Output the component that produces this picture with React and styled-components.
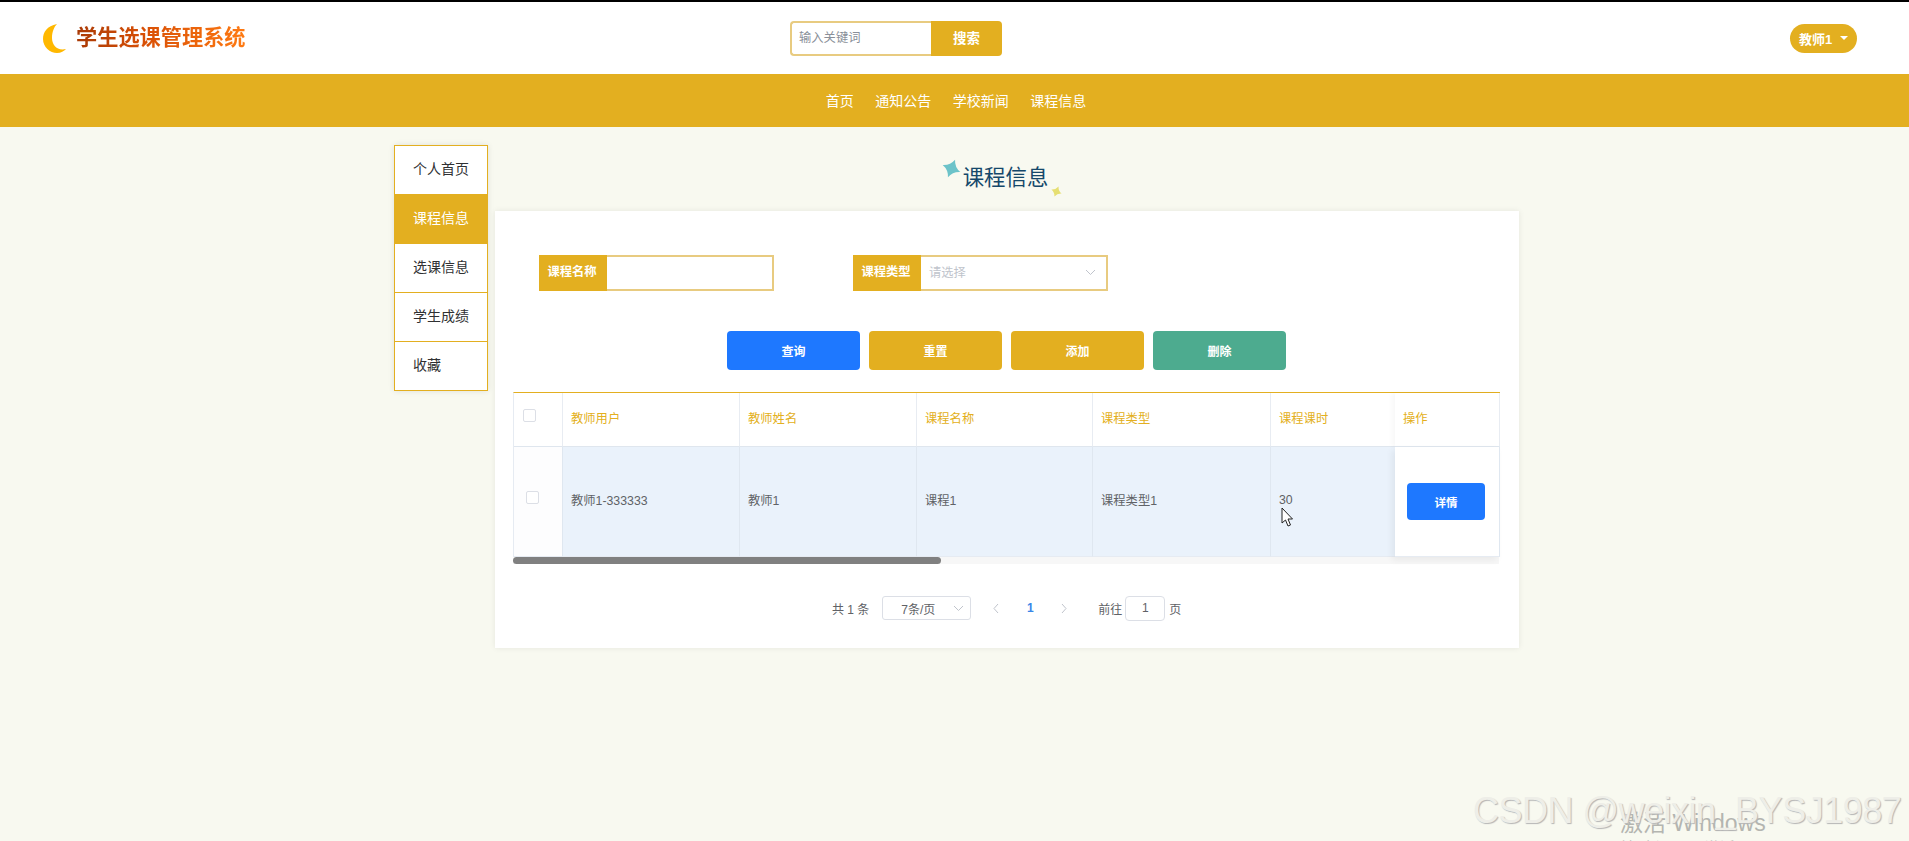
import React from "react";
import styled, { createGlobalStyle } from "styled-components";

const gold = "#e3af20";

const GlobalStyle = createGlobalStyle`
    html, body {
        margin: 0;
        padding: 0;
        background: #f8f9f0;
        font-family: "Liberation Sans", "Noto Sans CJK SC", sans-serif;
    }
    * {
        box-sizing: border-box;
    }
`

//styled components
const Page = styled.div`
    position: relative;
    height: 841px;
    overflow: hidden;
    border-top: 2px solid #000;
`
const Header = styled.header`
    height: 72px;
    background: #fff;
    display: grid;
    grid-template-columns: 747px 212px 1fr;
    align-items: center;
    padding: 0 52px 0 43px;
`
const Logo = styled.div`
    display: flex;
    align-items: center;
    gap: 10px;
`
const LogoText = styled.h1`
    margin: 0;
    font-size: 21.2px;
    line-height: 28px;
    font-weight: 700;
    background: linear-gradient(90deg, #a93a06 0%, #d84f05 40%, #ff7a12 100%);
    -webkit-background-clip: text;
    background-clip: text;
    color: transparent;
`
const SearchBox = styled.div`
    display: flex;
    width: 212px;
    height: 35px;
`
const SearchInput = styled.div`
    width: 141px;
    border: 2px solid #e8cb80;
    border-right: 0;
    border-radius: 4px 0 0 4px;
    padding-left: 7px;
    font-size: 12.3px;
    line-height: 31px;
    color: #8a8f99;
`
const SearchButton = styled.div`
    flex: 1;
    background: ${gold};
    border-radius: 0 4px 4px 0;
    color: #fff;
    font-size: 13.5px;
    font-weight: 700;
    text-align: center;
    line-height: 35px;
`
const UserPill = styled.div`
    justify-self: end;
    width: 67px;
    height: 29px;
    border-radius: 15px;
    background: ${gold};
    color: #fff;
    font-size: 13px;
    font-weight: 700;
    display: flex;
    align-items: center;
    padding-left: 9px;
    gap: 8px;
`
const Caret = styled.span`
    width: 0;
    height: 0;
    border-left: 4px solid transparent;
    border-right: 4px solid transparent;
    border-top: 4px solid #fff;
`
const NavBar = styled.nav`
    height: 53px;
    background: ${gold};
    display: flex;
    justify-content: center;
    align-items: center;
    gap: 21.5px;
    padding: 0 0 2px 3px;
`
const NavItem = styled.a`
    color: #fff;
    font-size: 14px;
`
const Main = styled.main`
    display: flex;
    align-items: flex-start;
    gap: 7px;
    margin: 18px 0 0 394px;
    width: 1124px;
`
const Sidebar = styled.aside`
    width: 94px;
    flex: none;
    border: 1px solid ${gold};
    box-shadow: 0 0 6px rgba(0, 0, 0, 0.1);
    background: #fff;
`
const SideItem = styled.div`
    height: ${(p) => (p.$last ? 48 : 49)}px;
    padding-left: 18px;
    font-size: 14px;
    line-height: 47px;
    color: ${(p) => (p.$active ? "#fff" : "#303133")};
    background: ${(p) => (p.$active ? gold : "#fff")};
    border-bottom: ${(p) => (p.$last ? "0" : `1px solid ${gold}`)};
`
const Content = styled.section`
    flex: 1;
`
const TitleRow = styled.div`
    height: 66px;
    display: flex;
    justify-content: center;
    align-items: flex-start;
    padding: 14px 10px 0 0;
`
const TitleWrap = styled.div`
    display: flex;
    align-items: flex-start;
`
const Title = styled.h2`
    margin: 4px 3px 0 2px;
    font-size: 21.4px;
    line-height: 30px;
    font-weight: 400;
    color: #15486a;
`
const SmallStar = styled.div`
    margin-top: 24px;
`
const Card = styled.div`
    background: #fff;
    box-shadow: 0 0 6px rgba(0, 0, 0, 0.08);
    padding: 44px 19px 28px 18px;
`
const Filters = styled.div`
    display: flex;
    gap: 79px;
    padding-left: 26px;
`
const Field = styled.div`
    display: flex;
    width: ${(p) => p.$w}px;
    height: 36px;
    border: 2px solid #e8cb80;
    background: #fff;
`
const FieldLabel = styled.div`
    width: 68px;
    margin: -2px 0 -2px -2px;
    padding-right: 2px;
    background: ${gold};
    color: #fff;
    font-size: 12.3px;
    font-weight: 700;
    text-align: center;
    line-height: 35px;
`
const FieldValue = styled.div`
    flex: 1;
    display: flex;
    justify-content: space-between;
    align-items: center;
    padding: 0 10px 2px 8px;
    font-size: 12.3px;
    color: #c0c4cc;
`
const Actions = styled.div`
    display: flex;
    justify-content: center;
    gap: 9px;
    margin-top: 40px;
`
const ActionButton = styled.button`
    width: 133px;
    height: 39px;
    border: 0;
    border-radius: 4px;
    background: ${(p) => p.$bg};
    color: #fff;
    font: 700 12px "Liberation Sans", "Noto Sans CJK SC", sans-serif;
`
const Table = styled.table`
    width: 986px;
    table-layout: fixed;
    border-collapse: separate;
    border-spacing: 0;
    margin-top: 22px;
    border-top: 1px solid ${gold};
    border-left: 1px solid #e6ebf2;
`
const HeadCell = styled.th`
    height: 54px;
    padding: 0 8px 3px;
    text-align: left;
    font-size: 12.3px;
    font-weight: 400;
    color: ${gold};
    background: #fff;
    border-right: 1px solid #e8ecf2;
    border-bottom: 1px solid #dfe6ee;
    &:nth-last-child(2) {
        border-right: 0;
    }
`
const CheckHeadCell = styled(HeadCell)`
    padding: 0;
`
const BodyCell = styled.td`
    height: 110px;
    padding: 0 8px 3px;
    font-size: 12.3px;
    color: #606266;
    background: ${(p) => (p.$plain ? "#fdfdfe" : "#eaf2fb")};
    border-right: 1px solid #dfe7f0;
    border-bottom: 1px solid #e6ebf2;
    &:nth-last-child(2) {
        border-right: 0;
    }
`
const CheckBodyCell = styled(BodyCell)`
    padding: 0;
`
const FixedHead = styled(HeadCell)`
    position: relative;
    z-index: 1;
    box-shadow: -3px 0 5px rgba(0, 0, 0, 0.03);
`
const FixedCell = styled(BodyCell)`
    position: relative;
    z-index: 1;
    background: #fff;
    padding: 0 12px;
    box-shadow: -3px 3px 7px rgba(0, 0, 0, 0.06);
`
const Check = styled.span`
    display: block;
    width: 13px;
    height: 13px;
    margin: ${(p) => p.$m};
    border: 1px solid #dcdfe6;
    border-radius: 2px;
    background: #fff;
`
const Track = styled.div`
    width: 986px;
    height: 7px;
    background: #f7f7f7;
`
const Thumb = styled.div`
    width: 428px;
    height: 7px;
    background: #808080;
    border-radius: 4px;
`
const DetailButton = styled(ActionButton)`
    display: block;
    width: 78px;
    height: 37px;
    font-size: 11.5px;
`
const Pager = styled.div`
    display: flex;
    align-items: center;
    height: 24px;
    margin-top: 32px;
    padding-left: 319px;
    font-size: 12px;
    color: #606266;
`
const PagerSelect = styled.div`
    width: 89px;
    height: 24px;
    margin-left: 13px;
    display: flex;
    align-items: center;
    justify-content: space-between;
    padding: 0 6px 0 18px;
    border: 1px solid #dcdfe6;
    border-radius: 3px;
`
const PagerArrows = styled.div`
    display: flex;
    align-items: center;
    width: 78px;
    margin: 0 29px 0 20px;
    justify-content: space-between;
`
const PageNum = styled.b`
    color: #3a86e8;
`
const PagerInput = styled.div`
    width: 40px;
    height: 25px;
    margin: 0 4px 0 3px;
    border: 1px solid #dcdfe6;
    border-radius: 4px;
    text-align: center;
    line-height: 23px;
`
const Watermark = styled.div`
    position: absolute;
    left: 1473px;
    top: 787px;
    font-size: 36px;
    letter-spacing: -0.5px;
    line-height: 44px;
    white-space: nowrap;
    color: #eeeee8;
    text-shadow: 1px 1px 1px #b5b5b5;
`
const ActivateNote = styled.div`
    position: absolute;
    left: 1620px;
    top: 807px;
    font-size: 23px;
    line-height: 28px;
    white-space: nowrap;
    color: #b4b5b0;
`
const ActivateHint = styled.div`
    font-size: 15px;
    line-height: 20px;
    margin-top: 1px;
`
const Cursor = styled.svg`
    position: absolute;
    left: 1281px;
    top: 505px;
`

const navItems = ["首页", "通知公告", "学校新闻", "课程信息"];
const sideItems = ["个人首页", "课程信息", "选课信息", "学生成绩", "收藏"];
const columns = [
    ["教师用户", "教师1-333333"],
    ["教师姓名", "教师1"],
    ["课程名称", "课程1"],
    ["课程类型", "课程类型1"],
    ["课程课时", "30"],
];

function Star({ size, color }) {
    return (
        <svg width={size} height={size} viewBox="0 0 20 20">
            <path
                d="M10 0 Q12.5 7.5 20 10 Q12.5 12.5 10 20 Q7.5 12.5 0 10 Q7.5 7.5 10 0 Z"
                fill={color}
                transform="rotate(22 10 10)"
            />
        </svg>
    );
}

function Chevron({ dir, color }) {
    const paths = {
        down: "M1 3l4.5 4.5L10 3",
        left: "M7 1L3 5.5 7 10",
        right: "M4 1l4 4.5L4 10",
    };
    return (
        <svg width="11" height="11" viewBox="0 0 11 11" fill="none" stroke={color} strokeWidth="1">
            <path d={paths[dir]} />
        </svg>
    );
}

export default function App() {
    return (
        <Page>
            <GlobalStyle />
            <Header>
                <Logo>
                    <svg width="23" height="29" viewBox="0 0 23 29">
                        <path
                            d="M14 0 C4 2 0 8 0 15 C0 23 7 29 14 29 C18 29 21 27 23 25 C14 27 9 21 9 14 C9 8 11 3 14 0 Z"
                            fill="#ffb800"
                        />
                    </svg>
                    <LogoText>学生选课管理系统</LogoText>
                </Logo>
                <SearchBox>
                    <SearchInput>输入关键词</SearchInput>
                    <SearchButton>搜索</SearchButton>
                </SearchBox>
                <UserPill>
                    教师1
                    <Caret />
                </UserPill>
            </Header>
            <NavBar>
                {navItems.map((item) => (
                    <NavItem key={item}>{item}</NavItem>
                ))}
            </NavBar>
            <Main>
                <Sidebar>
                    {sideItems.map((item, i) => (
                        <SideItem key={item} $active={i === 1} $last={i === 4}>
                            {item}
                        </SideItem>
                    ))}
                </Sidebar>
                <Content>
                    <TitleRow>
                        <TitleWrap>
                            <Star size={19} color="#6cc3c9" />
                            <Title>课程信息</Title>
                            <SmallStar>
                                <Star size={11} color="#e6df72" />
                            </SmallStar>
                        </TitleWrap>
                    </TitleRow>
                    <Card>
                        <Filters>
                            <Field $w={235}>
                                <FieldLabel>课程名称</FieldLabel>
                            </Field>
                            <Field $w={255}>
                                <FieldLabel>课程类型</FieldLabel>
                                <FieldValue>
                                    请选择
                                    <Chevron dir="down" color="#c0c4cc" />
                                </FieldValue>
                            </Field>
                        </Filters>
                        <Actions>
                            <ActionButton $bg="#1e78ff">查询</ActionButton>
                            <ActionButton $bg={gold}>重置</ActionButton>
                            <ActionButton $bg={gold}>添加</ActionButton>
                            <ActionButton $bg="#4dab8f">删除</ActionButton>
                        </Actions>
                        <Table>
                            <colgroup>
                                <col width="49" />
                                <col width="177" />
                                <col width="177" />
                                <col width="176" />
                                <col width="178" />
                                <col width="124" />
                                <col width="105" />
                            </colgroup>
                            <thead>
                                <tr>
                                    <CheckHeadCell>
                                        <Check $m="-9px 0 0 9px" />
                                    </CheckHeadCell>
                                    {columns.map(([head]) => (
                                        <HeadCell key={head}>{head}</HeadCell>
                                    ))}
                                    <FixedHead>操作</FixedHead>
                                </tr>
                            </thead>
                            <tbody>
                                <tr>
                                    <CheckBodyCell $plain>
                                        <Check $m="-9px 0 0 12px" />
                                    </CheckBodyCell>
                                    {columns.map(([head, value]) => (
                                        <BodyCell key={head}>{value}</BodyCell>
                                    ))}
                                    <FixedCell>
                                        <DetailButton $bg="#1e78ff">详情</DetailButton>
                                    </FixedCell>
                                </tr>
                            </tbody>
                        </Table>
                        <Track>
                            <Thumb />
                        </Track>
                        <Pager>
                            共 1 条
                            <PagerSelect>
                                7条/页
                                <Chevron dir="down" color="#c0c4cc" />
                            </PagerSelect>
                            <PagerArrows>
                                <Chevron dir="left" color="#c0c4cc" />
                                <PageNum>1</PageNum>
                                <Chevron dir="right" color="#c0c4cc" />
                            </PagerArrows>
                            前往
                            <PagerInput>1</PagerInput>
                            页
                        </Pager>
                    </Card>
                </Content>
            </Main>
            <ActivateNote>
                激活 Windows
                <ActivateHint>转到“设置”以激活 Windows。</ActivateHint>
            </ActivateNote>
            <Watermark>CSDN @weixin_BYSJ1987</Watermark>
            <Cursor width="13" height="20" viewBox="0 0 13 20">
                <path d="M1 1v15l3.5-3 2.5 6 2.5-1-2.5-6h4.5L1 1Z" fill="#fff" stroke="#222" strokeWidth="1" />
            </Cursor>
        </Page>
    );
}
